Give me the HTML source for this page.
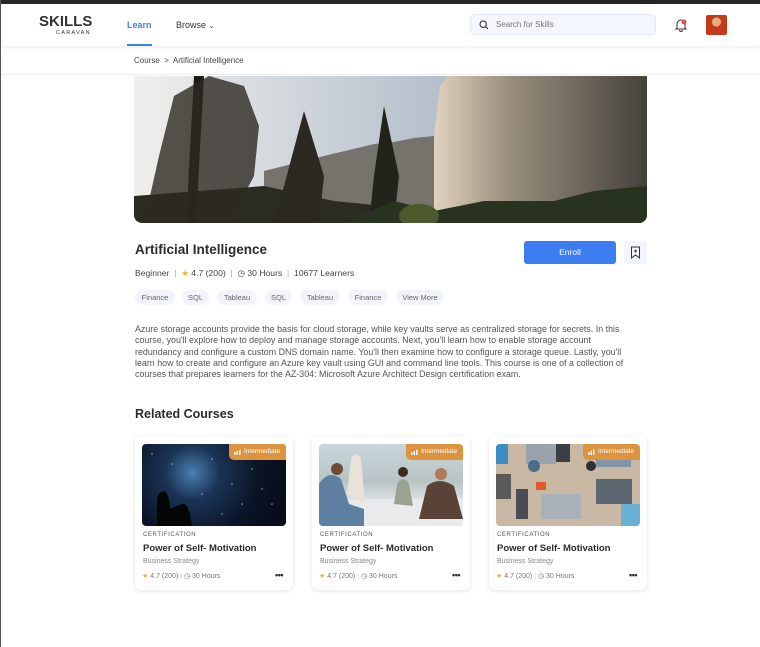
<!DOCTYPE html>
<html><head><meta charset="utf-8"><style>
*{margin:0;padding:0;box-sizing:border-box}
body{width:760px;height:647px;background:#fff;font-family:"Liberation Sans","DejaVu Sans",sans-serif;color:#2b2b2b;position:relative;overflow:hidden}
.topbar{position:absolute;left:0;top:0;width:760px;height:4px;background:#262626}
.leftl{position:absolute;left:0;top:0;width:1px;height:647px;background:#555}
.nav{position:absolute;left:1px;top:4px;width:759px;height:42px;background:#fff;box-shadow:0 2px 4px rgba(0,0,0,.06)}
.abs{position:absolute}
.crumb{position:absolute;left:134px;top:56px;font-size:8px;color:#444}
.line2{position:absolute;left:1px;top:74px;width:759px;height:1px;background:#eee}
.chip{position:absolute;top:290px;height:15px;border-radius:8px;background:#f1f4fa;font-size:7.5px;color:#666;line-height:15px;text-align:center}
.desc{position:absolute;left:135px;top:324px;font-size:8.9px;line-height:11.3px;color:#555;white-space:nowrap}
.card{position:absolute;top:436px;width:158px;height:154px;border-radius:6px;background:#fff;box-shadow:0 1px 5px rgba(0,0,0,.12)}
.img{position:absolute;left:7px;top:8px;width:144px;height:82px;border-radius:4px;overflow:hidden}
.badge{position:absolute;right:0;top:0;width:57px;height:16px;background:#dc9440;border-radius:0 4px 0 5px;color:#fff;font-size:6.5px;line-height:16px;padding-left:15px}
.badge i{position:absolute;left:5px;top:5px;width:7px;height:6px;background:linear-gradient(90deg,#fff 0 1.5px,transparent 1.5px 2.5px,#fff 2.5px 4px,transparent 4px 5px,#fff 5px 6.5px,transparent 6.5px);clip-path:polygon(0 60%,100% 0,100% 100%,0 100%)}
.cert{position:absolute;left:8px;top:96px;font-size:6px;letter-spacing:.6px;color:#555}
.ct{position:absolute;left:8px;top:107px;font-size:9.5px;font-weight:bold;color:#2b2b2b}
.cs{position:absolute;left:8px;top:122px;font-size:7px;color:#888}
.cm{position:absolute;left:7px;top:136px;font-size:7px;color:#777}
.dots{position:absolute;right:10px;top:134px;font-size:9px;font-weight:bold;letter-spacing:-.5px}
</style></head><body>
<div class="topbar"></div><div class="leftl"></div>
<div class="nav">
 <div class="abs" style="left:38px;top:9px;font-size:15px;font-weight:bold;letter-spacing:0;color:#333">SKILLS</div>
 <div class="abs" style="left:55px;top:26px;font-size:5.5px;letter-spacing:1.3px;color:#333">CARAVAN</div>
 <div class="abs" style="left:126px;top:16px;font-size:9px;font-weight:bold;color:#3d7ff0">Learn</div>
 <div class="abs" style="left:126px;top:40px;width:25px;height:2px;background:#3d7ff0"></div>
 <div class="abs" style="left:175px;top:16px;font-size:9px;color:#333">Browse <span style="font-size:7px">&#8964;</span></div>
 <div class="abs" style="left:469px;top:10px;width:186px;height:21px;border:1px solid #e3e8f2;border-radius:5px;background:#f4f7fd"></div>
 <svg class="abs" style="left:478px;top:16px" width="10" height="10"><circle cx="4.2" cy="4.2" r="3.2" fill="none" stroke="#333" stroke-width="1.1"/><path d="M6.6 6.6L9 9" stroke="#333" stroke-width="1.1"/></svg>
 <div class="abs" style="left:495px;top:16px;font-size:8px;color:#777">Search for Skills</div>
 <svg class="abs" style="left:673px;top:14px" width="14" height="14"><path d="M3 10V6a4 4 0 0 1 8 0v4l1 1H2z" fill="none" stroke="#333" stroke-width="1"/><path d="M5.5 12a1.5 1.5 0 0 0 3 0" fill="none" stroke="#333"/><circle cx="10" cy="4" r="2.5" fill="#e94b4b"/></svg>
 <div class="abs" style="left:705px;top:11px;width:21px;height:20px;border-radius:2px;background:radial-gradient(circle at 50% 35%,#e2b07a 0 4px,#c33b1c 5px)"></div>
</div>
<div class="crumb">Course &nbsp;&gt;&nbsp; Artificial Intelligence</div>
<div class="line2"></div>
<svg class="abs" style="left:134px;top:76px;border-radius:0 0 8px 8px;overflow:hidden" width="513" height="147">
 <defs>
  <linearGradient id="sky" x1="0" x2="1"><stop offset="0" stop-color="#f0efec"/><stop offset=".6" stop-color="#b4bfcc"/><stop offset="1" stop-color="#9aa6b4"/></linearGradient>
  <linearGradient id="rock" x1="0" x2="1"><stop offset="0" stop-color="#e0d2bd"/><stop offset=".35" stop-color="#9a8f7e"/><stop offset="1" stop-color="#45423c"/></linearGradient>
 </defs>
 <rect width="513" height="147" fill="url(#sky)"/>
 <path d="M130 95L190 80L240 68L260 66L280 62L300 60L305 147L130 147Z" fill="#76726c"/>
 <path d="M300 60L306 10L314 0L513 0L513 147L300 147Z" fill="url(#rock)"/>
 <path d="M0 147L0 120L130 110L200 125L300 135L513 118L513 147Z" fill="#2a2c24"/>
 <path d="M60 0L70 0L62 147L52 147Z" fill="#1e1b17"/>
 <path d="M40 20L75 0L110 10L125 50L120 100L95 147L10 147L25 80Z" fill="#2d2922" opacity=".8"/>
 <path d="M170 35L190 100L185 147L140 147L150 110Z" fill="#2b2822"/>
 <path d="M250 30L265 100L260 147L235 147L240 100Z" fill="#22241c"/>
 <path d="M210 147L260 125L300 135L350 125L420 125L460 115L513 110L513 147Z" fill="#28331f"/>
 <ellipse cx="285" cy="140" rx="20" ry="12" fill="#4a5a2c"/>
</svg>
<div class="abs" style="left:135px;top:242px;font-size:13.5px;font-weight:bold;color:#2b2b2b">Artificial Intelligence</div>
<div class="abs" style="left:524px;top:241px;width:92px;height:23px;border-radius:3px;background:#3b7cf0;color:#fff;font-size:8.5px;text-align:center;line-height:23px">Enroll</div>
<div class="abs" style="left:624px;top:241px;width:23px;height:23px;border-radius:3px;background:#f1f4fa"></div>
<svg class="abs" style="left:630px;top:246px" width="11" height="13"><path d="M1.5 1h8v11L5.5 9 1.5 12z" fill="none" stroke="#333" stroke-width="1"/><path d="M5.5 3.5v3M4 5h3" stroke="#333" stroke-width=".9"/></svg>
<div class="abs" style="left:135px;top:268px;font-size:8.6px;color:#444;white-space:nowrap">Beginner &nbsp;<span style="color:#aaa">|</span>&nbsp; <span style="color:#f2b01e">★</span> 4.7 (200) &nbsp;<span style="color:#aaa">|</span>&nbsp; ◷ 30 Hours &nbsp;<span style="color:#aaa">|</span>&nbsp; 10677 Learners</div>
<div class="chip" style="left:135px;width:40px">Finance</div>
<div class="chip" style="left:182px;width:27px">SQL</div>
<div class="chip" style="left:217px;width:40px">Tableau</div>
<div class="chip" style="left:265px;width:27px">SQL</div>
<div class="chip" style="left:300px;width:40px">Tableau</div>
<div class="chip" style="left:348px;width:40px">Finance</div>
<div class="chip" style="left:396px;width:48px">View More</div>
<div class="desc">Azure storage accounts provide the basis for cloud storage, while key vaults serve as centralized storage for secrets. In this<br>course, you'll explore how to deploy and manage storage accounts. Next, you'll learn how to enable storage account<br>redundancy and configure a custom DNS domain name. You'll then examine how to configure a storage queue. Lastly, you'll<br>learn how to create and configure an Azure key vault using GUI and command line tools. This course is one of a collection of<br>courses that prepares learners for the AZ-304: Microsoft Azure Architect Design certification exam.</div>
<div class="abs" style="left:135px;top:407px;font-size:12.5px;font-weight:bold;color:#2b2b2b">Related Courses</div>

<div class="card" style="left:135px"><div class="img" style="background:radial-gradient(circle at 35% 35%,#4a7fb0 0,#1b3456 25%,#0b1528 60%,#050a14);">
 <svg width="144" height="82" style="position:absolute;left:0;top:0"><g fill="#cfe3ff" opacity=".7"><circle cx="10" cy="10" r=".8"/><circle cx="30" cy="20" r=".8"/><circle cx="70" cy="15" r=".8"/><circle cx="90" cy="40" r=".8"/><circle cx="110" cy="25" r=".8"/><circle cx="130" cy="60" r=".8"/><circle cx="80" cy="70" r=".8"/><circle cx="120" cy="45" r=".8"/><circle cx="60" cy="50" r=".8"/><circle cx="100" cy="60" r=".8"/></g><path d="M15 82L15 55Q18 45 24 48Q28 55 28 65L40 60Q45 58 48 70L50 82Z" fill="#050505"/></svg>
 <div class="badge"><i></i>Intermediate</div></div>
 <div class="cert">CERTIFICATION</div><div class="ct">Power of Self- Motivation</div><div class="cs">Business Strategy</div>
 <div class="cm"><span style="color:#f2b01e">★</span> 4.7 (200) <span style="color:#ccc">|</span> ◷ 30 Hours</div><div class="dots">•••</div></div>

<div class="card" style="left:312px"><div class="img" style="background:linear-gradient(180deg,#c9d6dc 0,#b8c4c4 45%,#dfe3e6 70%,#8c8c8c 100%)">
 <svg width="144" height="82" style="position:absolute;left:0;top:0"><rect x="0" y="55" width="144" height="27" fill="#e8eaec"/><path d="M0 82L0 40Q10 25 22 35L30 60L45 65L45 82Z" fill="#5d7fa0"/><circle cx="18" cy="25" r="6" fill="#6d4a35"/><path d="M28 50L32 15Q36 5 42 15L46 60Z" fill="#e9e2d8"/><path d="M75 60L78 40Q84 30 90 40L94 62Z" fill="#9aa392"/><circle cx="84" cy="28" r="5" fill="#3e2a20"/><path d="M100 75L108 42Q120 32 135 42L144 75Z" fill="#5a4236"/><circle cx="122" cy="30" r="6" fill="#b07a58"/></svg>
 <div class="badge"><i></i>Intermediate</div></div>
 <div class="cert">CERTIFICATION</div><div class="ct">Power of Self- Motivation</div><div class="cs">Business Strategy</div>
 <div class="cm"><span style="color:#f2b01e">★</span> 4.7 (200) <span style="color:#ccc">|</span> ◷ 30 Hours</div><div class="dots">•••</div></div>

<div class="card" style="left:489px"><div class="img" style="background:#c9b8a4">
 <svg width="144" height="82" style="position:absolute;left:0;top:0"><rect x="30" y="0" width="30" height="20" fill="#9aa2ac"/><rect x="60" y="0" width="14" height="18" fill="#3a3f46"/><rect x="100" y="5" width="35" height="18" fill="#8095a8"/><rect x="0" y="30" width="15" height="25" fill="#5c5a58"/><rect x="45" y="50" width="40" height="25" fill="#a8b0b8"/><rect x="100" y="35" width="36" height="25" fill="#5c6670"/><rect x="20" y="45" width="12" height="30" fill="#4a4e54"/><rect x="40" y="38" width="10" height="8" fill="#e05a2a"/><circle cx="38" cy="22" r="6" fill="#4a6e8a"/><circle cx="95" cy="22" r="5" fill="#2f2f2f"/><rect x="0" y="0" width="12" height="20" fill="#3d8cc4"/><rect x="125" y="60" width="19" height="22" fill="#6ab0d4"/></svg>
 <div class="badge"><i></i>Intermediate</div></div>
 <div class="cert">CERTIFICATION</div><div class="ct">Power of Self- Motivation</div><div class="cs">Business Strategy</div>
 <div class="cm"><span style="color:#f2b01e">★</span> 4.7 (200) <span style="color:#ccc">|</span> ◷ 30 Hours</div><div class="dots">•••</div></div>
</body></html>
